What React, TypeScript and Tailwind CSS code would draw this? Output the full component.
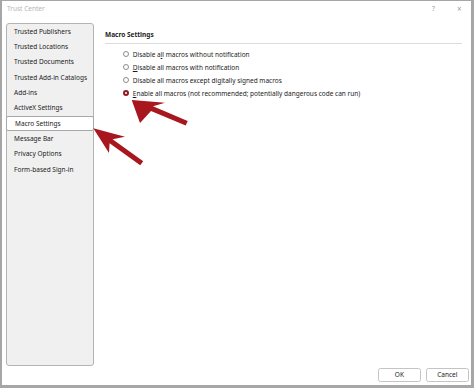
import React from "react";

const items = [
  "Trusted Publishers",
  "Trusted Locations",
  "Trusted Documents",
  "Trusted Add-in Catalogs",
  "Add-ins",
  "ActiveX Settings",
  "Macro Settings",
  "Message Bar",
  "Privacy Options",
  "Form-based Sign-in",
];

function Radio({ checked }: { checked?: boolean }) {
  return checked ? (
    <span className="inline-block w-[6px] h-[6px] rounded-full border-[2px] border-[#8e1c22] bg-white shrink-0" />
  ) : (
    <span className="inline-block w-[6px] h-[6px] rounded-full border border-[#8c8c8c] bg-white shrink-0" />
  );
}

export default function App() {
  return (
    <div
      className="relative w-[474px] h-[388px] bg-[#a6a6a6] pl-[2px] pr-[3.5px] pb-[3px] pt-[1px] flex overflow-hidden"
      style={{ fontFamily: '"Noto Sans", "Liberation Sans", sans-serif' }}
    >
      <div className="flex-1 bg-white flex flex-col">
        {/* title bar */}
        <div className="h-[21.5px] flex items-start pt-[3px] pl-[5px] pr-[9px] text-[6.5px] leading-[10px]">
          <span className="text-[#b4b4b4]">Trust Center</span>
          <span className="ml-auto text-[#9a9a9a] mr-[22px]">?</span>
          <span className="text-[#a0a0a0] text-[8px] leading-[10px]">×</span>
        </div>
        {/* body */}
        <div className="flex-1 flex pl-[3.5px] min-h-0">
          <div className="w-[88.6px] bg-[#f0f0f0] border border-[#b3b3b3] rounded-[3px] pt-[0.3px] flex flex-col">
            {items.map((t) => (
              <div
                key={t}
                className={
                  t === "Macro Settings"
                    ? "h-[15.36px] -ml-[1px] mr-[-1px] flex items-center pl-[8.6px] bg-white border border-[#a8a8a8] rounded-[2px] text-[6.5px] text-[#1b1b1b]"
                    : "h-[15.36px] flex items-center pl-[7.6px] text-[6.5px] text-[#1b1b1b]"
                }
              >
                {t}
              </div>
            ))}
          </div>
          <div className="flex-1 pl-[11px] pr-[9px] pt-[7px]">
            <div className="text-[6.5px] leading-[10px] font-bold text-[#1b1b1b]">Macro Settings</div>
            <div className="mt-[3.6px] h-px bg-[#dcdcdc]" />
            <div className="mt-[3.8px] pl-[18.3px] flex flex-col text-[6.5px] text-[#1b1b1b]">
              <div className="h-[13px] flex items-center gap-[3.4px]">
                <Radio />
                <span>
                  Disable a<span className="underline">l</span>l macros without notification
                </span>
              </div>
              <div className="h-[13px] flex items-center gap-[3.4px]">
                <Radio />
                <span>
                  <span className="underline">D</span>isable all macros with notification
                </span>
              </div>
              <div className="h-[13px] flex items-center gap-[3.4px]">
                <Radio />
                <span>
                  Disable all macros except di<span className="underline">g</span>itally signed macros
                </span>
              </div>
              <div className="h-[13px] flex items-center gap-[3.4px]">
                <Radio checked />
                <span>
                  <span className="underline">E</span>nable all macros (not recommended; potentially dangerous code can run)
                </span>
              </div>
            </div>
          </div>
        </div>
        {/* footer */}
        <div className="h-[19px] flex justify-end items-start gap-[5.5px] pt-[2.3px] pr-[2px]">
          <button className="w-[42.4px] h-[14px] border border-[#c4c4c4] rounded-[2.5px] bg-white text-[6.5px] text-[#1b1b1b] flex items-center justify-center">
            OK
          </button>
          <button className="w-[42.4px] h-[14px] border border-[#c4c4c4] rounded-[2.5px] bg-white text-[6.5px] text-[#1b1b1b] flex items-center justify-center">
            Cancel
          </button>
        </div>
      </div>
      <svg className="absolute left-0 top-0 pointer-events-none" width="474" height="388" viewBox="0 0 474 388">
        <polygon
          fill="#a8161e"
          points="131.7,100 165,102.7 153,106.3 187.7,121 185.7,125.6 151,110.9 140,123"
        />
        <polygon
          fill="#a8161e"
          points="93.3,128.3 125,136.7 112.6,139.2 143.2,161.3 140.2,165.3 109.6,143.2 109,153"
        />
      </svg>
    </div>
  );
}
